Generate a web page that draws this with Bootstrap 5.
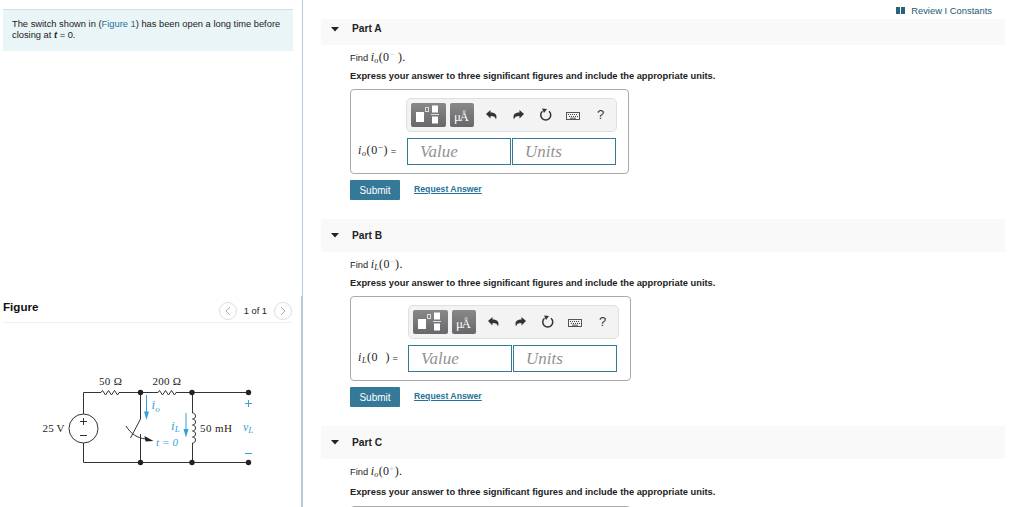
<!DOCTYPE html>
<html lang="en">
<head>
    <meta charset="UTF-8">
    <meta name="viewport" content="width=device-width, initial-scale=1.0">
    <title>Switched RL Circuit</title>
    <link rel="stylesheet" href="https://cdn.jsdelivr.net/npm/bootstrap@5.3.0/dist/css/bootstrap.min.css">
    <style>
        body {
            font-family: "Liberation Sans", Arial, sans-serif;
            font-size: 9.32px;
            line-height: 11px;
            color: #222;
            background: #fff;
        }
        a { color: #1f7299; }
        svg { display: block; flex-shrink: 0; }
        .left-pane { width: 303px; border-right: 1px solid #b9c9dc; }
        .intro {
            width: 290px;
            height: 42px;
            margin: 9px 0 0 3px;
            padding: 9px 0 0 9px;
            background: #e9f5f7;
            border-top: 1px solid #d8dfdd;
            white-space: nowrap;
        }
        .figure-pane { height: 211px; margin-right: -1px; border-right: 2px solid #b9c9dc; }
        .figure-head { width: 289px; height: 27px; margin-left: 3px; border-bottom: 1px solid #f0f0f0; }
        .figure-head h2 { font-size: 11.6px; line-height: 22px; color: #111; }
        .pager { gap: 7px; margin: 3px 0 0; }
        .pager button { width: 18px; height: 18px; border: 1px solid #dedede; background: #fff; }
        .page-count { font-size: 9.3px; padding-top: 2px; }
        .right-pane { width: 684px; margin-left: 18px; }
        .top-links { height: 19px; font-size: 9.4px; padding: 5px 13px 0 0; color: #1d5870; }
        .top-links a { color: #1d5870; }
        .part-head { height: 33px; background: #f9f9f9; padding-left: 10px; }
        .part-head h3 { font-size: 10.2px; line-height: 12px; margin-left: 13px; }
        .part-a .part-head { height: 26px; padding-bottom: 6px; }
        .part-body { padding-left: 29px; }
        .find-line { height: 25px; padding-top: 7px; white-space: nowrap; }
        .instruct { height: 19px; padding-top: 1px; font-weight: bold; white-space: nowrap; }
        .part-c .find-line { height: 27px; }
        .part-c .instruct { height: 20px; padding-top: 1px; }
        .math { font-family: "Liberation Serif", "Times New Roman", serif; font-size: 12px; letter-spacing: .3px; }
        .math sub, .math sup { font-size: 8px; line-height: 0; }
        .math sup { font-size: 9px; top: -.45em; }
        .faint { color: #bbb; }
        .answer-box { width: 279px; height: 85px; border: 1px solid #aaa; border-radius: 4px; padding: 8px 0 0 7px; }
        .part-b .answer-box, .part-c .answer-box { width: 281px; }
        .toolbar {
            width: 211px;
            height: 34px;
            margin-left: 48px;
            padding-left: 4px;
            background: #f3f3f3;
            border: 1px solid #dfdfdf;
            border-radius: 5px;
        }
        .tool-dark { height: 24px; border-radius: 2px; background: linear-gradient(#88888b, #68686b); }
        .fields { margin-top: 6px; }
        .field-label { width: 49px; line-height: 24px; white-space: nowrap; }
        .field-label .math { letter-spacing: .6px; }
        .part-b .toolbar { margin-left: 50px; }
        .part-b .field-label { width: 50px; }
        .entry {
            width: 104px;
            height: 27px;
            padding: 0 0 0 12px;
            border: 1px solid #337b98;
            border-radius: 0;
            background: #fff;
            font: italic 17px "Liberation Serif", serif;
        }
        .unit-entry { margin-left: 1px; }
        .entry::placeholder { color: #929292; opacity: 1; }
        .actions { height: 45px; padding-top: 6px; }
        .btn-submit {
            width: 50px;
            height: 20px;
            font-size: 10px;
            line-height: 21px;
            border-radius: 1px;
            background: #347998;
            color: #fff;
        }
        .request { font-size: 8.7px; font-weight: bold; margin-left: 14px; }
        .circuit { font-family: "Liberation Serif", serif; font-size: 11px; }
    </style>
</head>
<body class="overflow-hidden">

    <svg class="d-none">
        <symbol id="tools" viewBox="0 0 124 24">
            <!-- undo and redo -->
            <path d="M4 11l4.500-4v2.500c5 0 7 2.500 5.500 7-.6-2.500-2-3.500-5.500-3.500v2.500z" fill="#333"/>
            <path d="M42 11l-4.500-4v2.500c-5 0-7 2.500-5.500 7 .6-2.500 2-3.500 5.500-3.500v2.500z" fill="#333"/>
            <!-- reset -->
            <path d="M60.500 8.200a5 5 0 1 0 6.500 0" fill="none" stroke="#333" stroke-width="1.500"/>
            <path d="M60 5.500l5 .5-3 4z" fill="#333"/>
            <!-- keyboard -->
            <rect x="84.500" y="9.500" width="13" height="7" fill="#f3f3f3" stroke="#555"/>
            <path d="M86 11.500h10M87 13.500h9" stroke="#444" stroke-dasharray="1 1"/>
            <path d="M88 15.200h6" stroke="#555"/>
            <text x="115" y="16" font-size="13" fill="#333" font-family="Liberation Sans">?</text>
        </symbol>
        <symbol id="template" viewBox="0 0 35 24">
            <rect x="5" y="9" width="8" height="10" fill="#fff"/>
            <rect x="14.500" y="4.500" width="3" height="4" fill="none" stroke="#ddd"/>
            <rect x="21" y="2.500" width="6" height="7" fill="#fff"/>
            <path d="M20 11.500h8" stroke="#ddd"/>
            <rect x="21" y="13.500" width="6" height="7" fill="#fff"/>
        </symbol>
        <symbol id="units" viewBox="0 0 24 24">
            <text x="4" y="18" textLength="15" font-size="13" fill="#fff" font-family="Liberation Serif">μÅ</text>
        </symbol>
    </svg>

    <div class="d-flex vh-100 overflow-hidden">
        <aside class="left-pane d-flex flex-column justify-content-between flex-shrink-0">
            <div class="intro">
                The switch shown in (<a href="#figure" class="text-decoration-none">Figure 1</a>) has been open a long time before<br>
                closing at <i><b>t</b></i> = 0.
            </div>

            <section class="figure-pane" id="figure">
                <div class="figure-head d-flex justify-content-between">
                    <h2 class="fw-bold m-0">Figure</h2>
                    <div class="pager d-flex align-items-center">
                        <button class="rounded-circle p-0 d-flex align-items-center justify-content-center" aria-label="Previous">
                            <svg width="6" height="10"><path d="M5 1L1 5l4 4" fill="none" stroke="#aaa"/></svg>
                        </button>
                        <span class="page-count">1 of 1</span>
                        <button class="rounded-circle p-0 d-flex align-items-center justify-content-center" aria-label="Next">
                            <svg width="6" height="10"><path d="M1 1l4 4-4 4" fill="none" stroke="#aaa"/></svg>
                        </button>
                    </div>
                </div>
                <svg class="circuit" width="300" height="184" viewBox="0 323 300 184">
                    <!-- wires -->
                    <g fill="none" stroke="#333" stroke-width="1">
                        <path d="M83.500 414V392.500H101l1.500-2 3 4.500 3-4.500 3 4.500 3-4.500 3 4.500 1.500-2.500H158l1.500-2 3 4.500 3-4.500 3 4.500 3-4.500 3 4.500 1.500-2.500H248.500"/>
                        <path d="M83.500 443v19.500h165M140.500 392.500V419l-10 19M140.500 434v28.500"/>
                        <path d="M126 426c5 8 11 12 20 13"/>
                        <path d="M192.500 392.500V413c4 0 4 6 0 6 4 0 4 6 0 6 4 0 4 6 0 6 4 0 4 6 0 6 4 0 4 6 0 6v19.500"/>
                        <circle cx="83.500" cy="428.500" r="14.500"/>
                        <path d="M80 421.500h7M83.500 418v7M80 435.500h7"/>
                    </g>
                    <path d="M153.500 441l-9-5 1 5.500z" fill="#222"/>
                    <g fill="#222">
                        <circle cx="140.500" cy="392.500" r="2.700"/><circle cx="192" cy="392.500" r="2.700"/><circle cx="248.500" cy="392.500" r="2.700"/>
                        <circle cx="140.500" cy="462.500" r="2.700"/><circle cx="192" cy="462.500" r="2.700"/><circle cx="248.500" cy="462.500" r="2.700"/>
                        <text x="99" y="385" textLength="23">50 Ω</text>
                        <text x="152.500" y="385" textLength="28.500">200 Ω</text>
                        <text x="42.500" y="432" textLength="22">25 V</text>
                        <text x="200" y="432" textLength="32">50 mH</text>
                    </g>
                    <g stroke="#32a3d4">
                        <path d="M146.500 395v18M186 413v18M245 403.500h7M248.500 400v7M245 453.500h7"/>
                    </g>
                    <g fill="#32a3d4">
                        <path d="M144 411.500h5l-2.500 8.500zM183.500 429h5l-2.500 8.500z"/>
                        <g font-style="italic">
                            <text x="151.500" y="409" font-size="13">i<tspan font-size="9" dy="2.500">o</tspan></text>
                            <text x="171" y="430" font-size="13">i<tspan font-size="9" dy="2">L</tspan></text>
                            <text x="156" y="446" font-size="11" textLength="22">t = 0</text>
                            <text x="243" y="431" font-size="12">v<tspan font-size="9" dy="2">L</tspan></text>
                        </g>
                    </g>
                </svg>
            </section>
        </aside>

        <main class="right-pane">
            <div class="top-links d-flex justify-content-end">
                <svg width="9" height="10" class="me-1"><path d="M0 2h4v7H0zM5 2h4v7H5z" fill="#27647a"/></svg>
                <span>&thinsp;<a href="#" class="text-decoration-none">Review</a> I <a href="#" class="text-decoration-none">Constants</a></span>
            </div>

            <section class="part-a">
                <div class="part-head d-flex align-items-center">
                    <svg width="8" height="5"><path d="M0 0h8L4 4.500z" fill="#222"/></svg>
                    <h3 class="fw-bold mb-0">Part A</h3>
                </div>
                <div class="part-body">
                    <div class="find-line">Find <span class="math"><i>i<sub>o</sub></i>(0<sup class="faint">−</sup> ).</span></div>
                    <div class="instruct">Express your answer to three significant figures and include the appropriate units.</div>
                    <div class="answer-box">
                        <div class="toolbar d-flex align-items-center">
                            <svg class="tool-dark" width="35"><use href="#template"/></svg>
                            <svg class="tool-dark ms-1" width="24"><use href="#units"/></svg>
                            <svg class="ms-2" width="124" height="24"><use href="#tools"/></svg>
                        </div>
                        <div class="fields d-flex">
                            <label class="field-label" for="valueA"><span class="math"><i>i<sub>o</sub></i>(0<sup>−</sup>)</span> =</label>
                            <input class="entry" id="valueA" placeholder="Value">
                            <input class="entry unit-entry" aria-label="Units" placeholder="Units">
                        </div>
                    </div>
                    <div class="actions d-flex">
                        <button class="btn btn-submit border-0 p-0">Submit</button>
                        <a href="#" class="request mt-1">Request Answer</a>
                    </div>
                </div>
            </section>

            <section class="part-b">
                <div class="part-head d-flex align-items-center">
                    <svg width="8" height="5"><path d="M0 0h8L4 4.500z" fill="#222"/></svg>
                    <h3 class="fw-bold mb-0">Part B</h3>
                </div>
                <div class="part-body">
                    <div class="find-line">Find <span class="math"><i>i<sub>L</sub></i>(0<sup class="faint">−</sup>).</span></div>
                    <div class="instruct">Express your answer to three significant figures and include the appropriate units.</div>
                    <div class="answer-box">
                        <div class="toolbar d-flex align-items-center">
                            <svg class="tool-dark" width="35"><use href="#template"/></svg>
                            <svg class="tool-dark ms-1" width="24"><use href="#units"/></svg>
                            <svg class="ms-2" width="124" height="24"><use href="#tools"/></svg>
                        </div>
                        <div class="fields d-flex">
                            <label class="field-label" for="valueB"><span class="math"><i>i<sub>L</sub></i>(0&nbsp; )</span> =</label>
                            <input class="entry" id="valueB" placeholder="Value">
                            <input class="entry unit-entry" aria-label="Units" placeholder="Units">
                        </div>
                    </div>
                    <div class="actions d-flex">
                        <button class="btn btn-submit border-0 p-0">Submit</button>
                        <a href="#" class="request mt-1">Request Answer</a>
                    </div>
                </div>
            </section>

            <section class="part-c">
                <div class="part-head d-flex align-items-center">
                    <svg width="8" height="5"><path d="M0 0h8L4 4.500z" fill="#222"/></svg>
                    <h3 class="fw-bold mb-0">Part C</h3>
                </div>
                <div class="part-body">
                    <div class="find-line">Find <span class="math"><i>i<sub>o</sub></i>(0<sup class="faint">+</sup>).</span></div>
                    <div class="instruct">Express your answer to three significant figures and include the appropriate units.</div>
                    <div class="answer-box"></div>
                </div>
            </section>
        </main>
    </div>

    <script src="https://cdn.jsdelivr.net/npm/bootstrap@5.3.0/dist/js/bootstrap.bundle.min.js"></script>
</body>
</html>
